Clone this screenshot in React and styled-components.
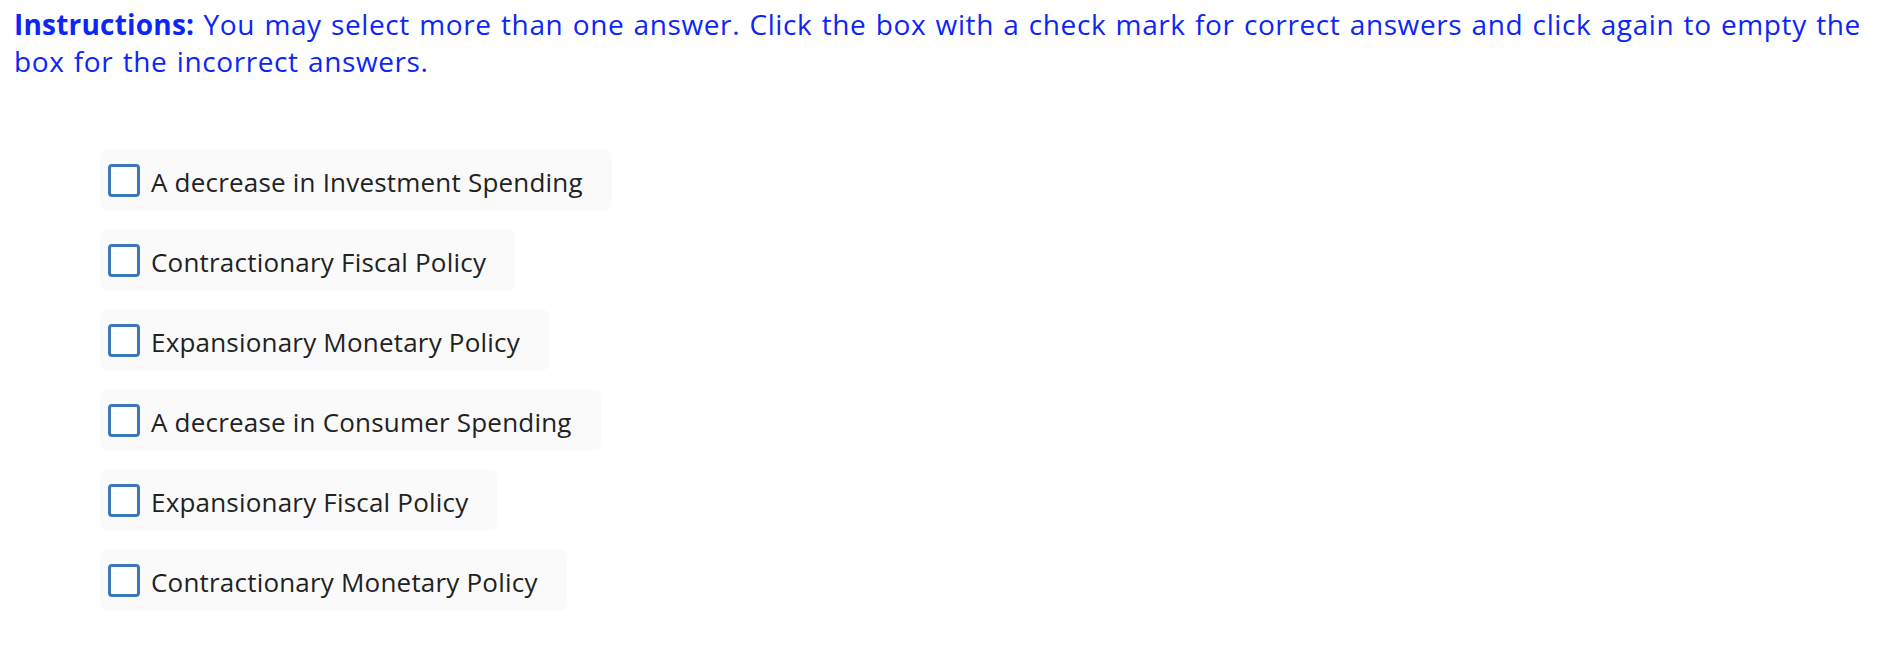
import React from "react";
import styled, { createGlobalStyle } from "styled-components";

const GlobalStyle = createGlobalStyle`
  html, body {
    margin: 0;
    padding: 0;
    background: #ffffff;
  }
`;

const Page = styled.div`
  width: 1892px;
  font-family: "Open Sans", "Liberation Sans", sans-serif;
`;

const Instructions = styled.p`
  margin: 0;
  padding: 6px 0 0 14px;
  color: #0d26f7;
  font-size: 28px;
  line-height: 37px;
  font-weight: 400;
  letter-spacing: 0.6px;
  word-spacing: 1.5px;
`;

const Label = styled.strong`
  font-weight: 700;
  letter-spacing: 0.2px;
`;

const AnswerList = styled.div`
  display: flex;
  flex-direction: column;
  align-items: flex-start;
  gap: 20px;
  margin: 70px 0 0 100px;
`;

const AnswerRow = styled.label`
  display: flex;
  align-items: center;
  gap: 11px;
  height: 60px;
  box-sizing: border-box;
  padding: 0 29px 0 8px;
  background: #fafafa;
  border-radius: 6px;
  cursor: pointer;
`;

const Box = styled.span`
  flex: none;
  width: 32px;
  height: 33px;
  box-sizing: border-box;
  border: 3.5px solid #3c78b9;
  border-radius: 4px;
  background: #ffffff;
`;

const AnswerText = styled.span`
  padding-top: 3px;
  color: #222222;
  font-size: 26px;
  line-height: 32px;
  letter-spacing: 0.2px;
`;

const answers = [
  "A decrease in Investment Spending",
  "Contractionary Fiscal Policy",
  "Expansionary Monetary Policy",
  "A decrease in Consumer Spending",
  "Expansionary Fiscal Policy",
  "Contractionary Monetary Policy",
];

function App() {
  return (
    <Page>
      <GlobalStyle />
      <Instructions>
        <Label>Instructions:</Label> You may select more than one answer. Click
        the box with a check mark for correct answers and click again to empty
        the box for the incorrect answers.
      </Instructions>
      <AnswerList>
        {answers.map((answer) => (
          <AnswerRow key={answer}>
            <Box />
            <AnswerText>{answer}</AnswerText>
          </AnswerRow>
        ))}
      </AnswerList>
    </Page>
  );
}

export default App;
